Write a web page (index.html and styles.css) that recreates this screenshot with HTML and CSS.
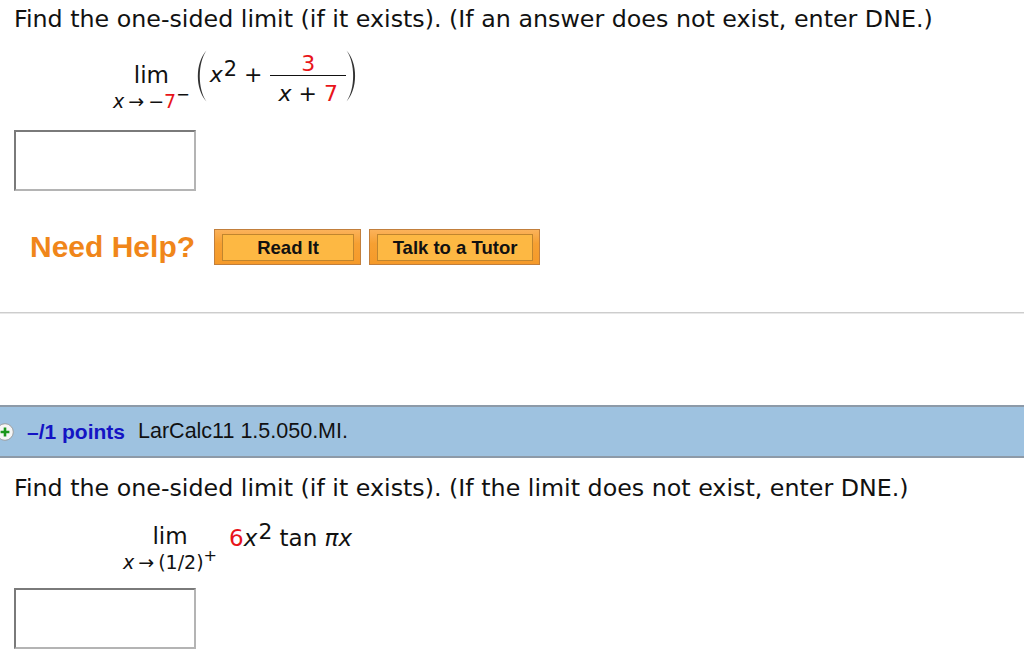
FILE: index.html
```html
<!DOCTYPE html>
<html>
<head>
<meta charset="utf-8">
<link rel="stylesheet" href="styles.css">
</head>
<body>
<div class="q q1">
  <p class="prompt">Find the one-sided limit (if it exists). (If an answer does not exist, enter DNE.)</p>
  <div class="math math1">
    <div class="limit">
      <span class="lim">lim</span>
      <span class="sub"><i>x</i><span class="arr">→</span>−<span class="red">7</span><sup>−</sup></span>
    </div>
    <svg class="paren lp" width="12" height="52" viewBox="0 0 12 52"><path d="M11.5 0.5 C0 13 0 39 11.5 51.5 C2.6 39 2.6 13 11.5 0.5 Z" fill="#333"/></svg>
    <span class="term"><i>x</i><sup>2</sup> +</span>
    <span class="frac">
      <span class="num red">3</span>
      <span class="den"><i>x</i> + <span class="red">7</span></span>
    </span>
    <svg class="paren rp" width="12" height="52" viewBox="0 0 12 52"><path d="M0.5 0.5 C12 13 12 39 0.5 51.5 C9.4 39 9.4 13 0.5 0.5 Z" fill="#333"/></svg>
  </div>
  <div class="answer"></div>
  <div class="help">
    <span class="need">Need Help?</span>
    <span class="btn btn-read"><span class="btn-in">Read It</span></span>
    <span class="btn btn-tutor"><span class="btn-in">Talk to a Tutor</span></span>
  </div>
</div>
<div class="rule"></div>
<div class="bar">
  <span class="plus"><svg width="18" height="18" viewBox="0 0 18 18"><circle cx="9" cy="9" r="8.3" fill="#f6f6f6" stroke="#9a9a9a" stroke-width="0.9"/><path d="M9 4.6v8.8M4.6 9h8.8" stroke="#1a961a" stroke-width="2.6"/></svg></span>
  <span class="pts">–/1 points</span>
  <span class="ref">LarCalc11 1.5.050.MI.</span>
</div>
<div class="q q2">
  <p class="prompt">Find the one-sided limit (if it exists). (If the limit does not exist, enter DNE.)</p>
  <div class="math math2">
    <div class="limit">
      <span class="lim">lim</span>
      <span class="sub"><i>x</i><span class="arr">→</span>(1/2)<sup>+</sup></span>
    </div>
    <span class="term2"><span class="red">6</span><i>x</i><sup>2</sup> tan <i>πx</i></span>
  </div>
  <div class="answer"></div>
</div>
</body>
</html>
```
FILE: styles.css
```css
html, body {
  margin: 0;
  padding: 0;
  background: #fff;
}
body {
  font-family: "DejaVu Sans", Verdana, sans-serif;
  color: #000;
  width: 1024px;
  overflow: hidden;
}
.q {
  padding: 0 14px;
}
.prompt {
  margin: 0;
  font-size: 23.75px;
  line-height: 28px;
  padding-top: 5px;
  white-space: nowrap;
  color: #111;
}
.red { color: #e8141a; }
i { font-style: italic; }
sup {
  font-size: 0.95em;
  vertical-align: 0.3em;
  line-height: 0;
  margin-left: 1px;
}
.math {
  display: flex;
  align-items: flex-start;
  color: #111;
}
.math1 {
  margin-left: 99px;
  margin-top: 17px;
}
.limit {
  display: flex;
  flex-direction: column;
  align-items: center;
}
.math1 .limit { margin-top: 12px; }
.lim {
  font-size: 23px;
  line-height: 26px;
}
.sub {
  font-size: 19px;
  line-height: 20px;
  margin-top: 3px;
  white-space: nowrap;
}
.sub sup { font-size: 0.85em; vertical-align: 0.5em; margin-left: 0; }
.arr {
  margin: 0 4px;
}
.paren {
  flex: none;
}
.lp { margin-left: 5px; }
.term {
  font-size: 22px;
  line-height: 24px;
  white-space: nowrap;
  margin-top: 13px;
  margin-left: 3px;
  margin-right: 8px;
}
.frac {
  display: inline-flex;
  flex-direction: column;
  align-items: stretch;
  font-size: 22px;
  margin-top: 3px;
}
.num {
  line-height: 22px;
  border-bottom: 1px solid #111;
  text-align: center;
}
.den {
  line-height: 24px;
  padding: 6px 8px 0;
  white-space: nowrap;
}
.rp { margin-left: 0; }
.answer {
  width: 178px;
  height: 57px;
  border-style: solid;
  border-width: 2px;
  border-color: #7a7a7a #b4b4b4 #b4b4b4 #7a7a7a;
  background: #fff;
}
.q1 .answer { margin-top: 19px; }
.help {
  display: flex;
  align-items: center;
  height: 36px;
  margin-top: 38px;
  margin-left: 16px;
}
.need {
  font-family: "Liberation Sans", Arial, sans-serif;
  font-weight: bold;
  font-size: 30px;
  color: #f0861a;
  margin-right: 19px;
}
.btn {
  display: flex;
  box-sizing: border-box;
  height: 36px;
  padding: 4px 6px 3px 7px;
  border: 1px solid #c27f3c;
  background: linear-gradient(#fbb25a, #f6a032 40%, #f59a2a);
  margin-right: 8px;
}
.btn-read { width: 147px; }
.btn-tutor { width: 171px; }
.btn-in {
  flex: 1;
  display: flex;
  align-items: center;
  justify-content: center;
  border: 1px solid #c0852e;
  background: #fdb843;
  font-family: "Liberation Sans", Arial, sans-serif;
  font-weight: bold;
  font-size: 18.5px;
  color: #111;
}
.rule {
  margin-top: 47px;
  height: 1px;
  border-top: 1px solid #cdcdcd;
  background: #e8e8e8;
}
.bar {
  margin-top: 91px;
  height: 49px;
  border-top: 2px solid #8d9aa8;
  border-bottom: 2px solid #8d9aa8;
  background: #9ec2e0;
  display: flex;
  align-items: center;
  font-family: "Liberation Sans", Arial, sans-serif;
  font-size: 21px;
  position: relative;
}
.plus {
  position: absolute;
  left: -4px;
  top: 16px;
  line-height: 0;
}
.pts {
  color: #1414c4;
  font-weight: bold;
  margin-left: 27px;
  margin-right: 13px;
}
.ref { color: #111; font-size: 21.5px; }
.q2 .prompt { padding-top: 16px; }
.math2 {
  margin-left: 109px;
  margin-top: 21px;
}
.term2 {
  font-size: 23px;
  line-height: 24px;
  margin-left: 12px;
  margin-top: 3px;
  white-space: nowrap;
}
.q2 .answer { margin-top: 16px; }
```
